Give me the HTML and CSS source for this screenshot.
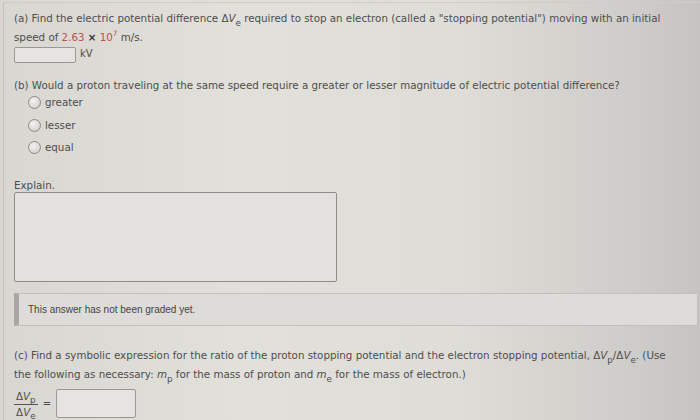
FILE: index.html
```html
<!DOCTYPE html>
<html>
<head>
<meta charset="utf-8">
<link rel="stylesheet" href="styles.css">
</head>
<body>
<div class="page">
  <div class="part part-a">
    <p class="q">(a) Find the electric potential difference Δ<i>V</i><sub>e</sub> required to stop an electron (called a "stopping potential") moving with an initial</p>
    <p class="q">speed of <span class="num">2.63 <b>×</b> 10<sup>7</sup></span> m/s.</p>
    <div class="answer-row"><span class="box small"></span><span class="unit">kV</span></div>
  </div>

  <div class="part part-b">
    <p class="q">(b) Would a proton traveling at the same speed require a greater or lesser magnitude of electric potential difference?</p>
    <ul class="choices">
      <li><span class="radio"></span>greater</li>
      <li><span class="radio"></span>lesser</li>
      <li><span class="radio"></span>equal</li>
    </ul>
  </div>

  <div class="part part-explain">
    <p class="q">Explain.</p>
    <div class="textarea"></div>
  </div>

  <div class="graded">This answer has not been graded yet.</div>

  <div class="part part-c">
    <p class="q">(c) Find a symbolic expression for the ratio of the proton stopping potential and the electron stopping potential, Δ<i>V</i><sub>p</sub>/Δ<i>V</i><sub>e</sub>. (Use</p>
    <p class="q">the following as necessary: <i>m</i><sub>p</sub> for the mass of proton and <i>m</i><sub>e</sub> for the mass of electron.)</p>
    <div class="frac-row">
      <div class="frac">
        <span class="top">Δ<i>V</i><sub>p</sub></span>
        <span class="bot">Δ<i>V</i><sub>e</sub></span>
      </div>
      <span class="eq">=</span>
      <span class="box wide"></span>
    </div>
  </div>
</div>
</body>
</html>
```
FILE: styles.css
```css
html, body {
  margin: 0;
  padding: 0;
  width: 700px;
  height: 420px;
  overflow: hidden;
}
body {
  background: linear-gradient(90deg, #d9d7d2 0%, #e2e0db 35%, #dfddd8 65%, #cfcdc9 90%, #c6c4c1 100%);
  font-family: "DejaVu Sans", Verdana, sans-serif;
  font-size: 10.3px;
  color: #4d4d4d;
}
.page {
  height: 420px;
  box-sizing: border-box;
  border-left: 1px solid #c4c2be;
  border-top: 1px solid #cfcdc9;
  margin-left: 3px;
  margin-top: 2px;
  padding-left: 10px;
}
.q {
  margin: 0;
  line-height: 19px;
  white-space: nowrap;
}
.part-a { padding-top: 6px; }
sub { font-size: 0.85em; vertical-align: -4px; line-height: 0; }
sup { font-size: 0.7em; vertical-align: 5px; line-height: 0; }
.num { color: #c0504d; }
.num b { color: #333; font-weight: bold; }
.answer-row {
  display: flex;
  align-items: center;
  gap: 4px;
}
.box {
  display: block;
  border: 1px solid #9a9896;
  border-radius: 2px;
  background: #e6e4e0;
  box-sizing: border-box;
}
.box.small { width: 62px; height: 16px; }
.box.wide { width: 80px; height: 29px; }
.unit { font-size: 10px; margin-top: -4px; }

.part-b { margin-top: 13px; }
.choices {
  list-style: none;
  margin: 0;
  padding: 0 0 0 14px;
}
.choices li {
  display: flex;
  align-items: center;
  gap: 4px;
  height: 22px;
}
.choices li:first-child { height: 14px; margin-bottom: 5px; }
.radio {
  width: 11px;
  height: 11px;
  border-radius: 50%;
  border: 1px solid #8d8b89;
  background: radial-gradient(circle at 40% 35%, #f4f3f1 0%, #dcdad6 60%, #c2c0bc 100%);
}

.part-explain { margin-top: 18px; }
.textarea {
  width: 323px;
  height: 90px;
  box-sizing: border-box;
  border: 1px solid #8f8d8a;
  border-radius: 2px;
  background: #e3e1dd;
  margin-top: -3px;
}

.graded {
  margin-top: 11px;
  width: 684px;
  height: 33px;
  box-sizing: border-box;
  border: 1px solid #c2c0bc;
  border-left: 5px solid #a9a7a4;
  background: #dedcd8;
  font-family: "Liberation Sans", Arial, sans-serif;
  font-size: 10px;
  color: #444;
  padding-left: 9px;
  display: flex;
  align-items: center;
}

.part-c { margin-top: 20px; }
.frac-row {
  display: flex;
  align-items: center;
  gap: 5px;
  margin-top: 5px;
}
.frac {
  display: flex;
  flex-direction: column;
  align-items: center;
  line-height: 12px;
}
.frac .top { border-bottom: 1px solid #555; padding: 0 2px 2px; }
.frac .bot { padding-top: 1px; }
.frac sub { vertical-align: -3px; }
.eq { font-size: 10px; }
```
